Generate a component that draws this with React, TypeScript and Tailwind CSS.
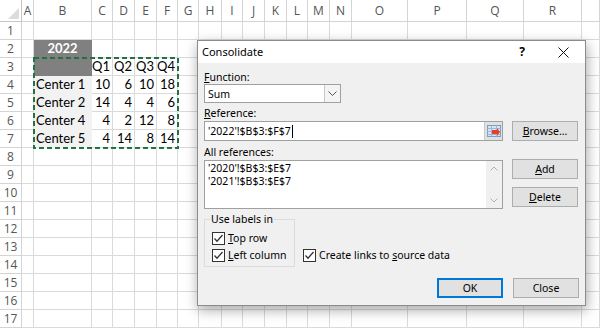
import React from "react";

const colLabels = ["", "A", "B", "C", "D", "E", "F", "G", "H", "I", "J", "K", "L", "M", "N", "O", "P", "Q", "R", ""];

type CellInfo = { t: string; kind: "dark" | "light" | "num" | "plain" | "label" };

const data: Record<string, CellInfo> = {
  "2-2": { t: "2022", kind: "dark" },
  "3-2": { t: "", kind: "dark" },
  "3-3": { t: "Q1", kind: "num" },
  "3-4": { t: "Q2", kind: "num" },
  "3-5": { t: "Q3", kind: "num" },
  "3-6": { t: "Q4", kind: "num" },
  "4-2": { t: "Center 1", kind: "light" },
  "4-3": { t: "10", kind: "num" },
  "4-4": { t: "6", kind: "num" },
  "4-5": { t: "10", kind: "num" },
  "4-6": { t: "18", kind: "num" },
  "5-2": { t: "Center 2", kind: "light" },
  "5-3": { t: "14", kind: "num" },
  "5-4": { t: "4", kind: "num" },
  "5-5": { t: "4", kind: "num" },
  "5-6": { t: "6", kind: "num" },
  "6-2": { t: "Center 4", kind: "light" },
  "6-3": { t: "4", kind: "num" },
  "6-4": { t: "2", kind: "num" },
  "6-5": { t: "12", kind: "num" },
  "6-6": { t: "8", kind: "num" },
  "7-2": { t: "Center 5", kind: "light" },
  "7-3": { t: "4", kind: "num" },
  "7-4": { t: "14", kind: "num" },
  "7-5": { t: "8", kind: "num" },
  "7-6": { t: "14", kind: "num" },
};

function Cell({ r, c }: { r: number; c: number }) {
  const d = data[`${r}-${c}`];
  if (!d) return <div className="border-r border-b border-[#dadada] bg-white" />;
  if (d.kind === "dark")
    return (
      <div className="border-r border-b border-[#808080] bg-[#808080] flex items-center justify-center text-white font-bold">
        {d.t}
      </div>
    );
  if (d.kind === "light")
    return (
      <div className="border-r border-b border-[#f2f2f2] bg-[#f2f2f2] flex items-center pl-[2px] whitespace-nowrap">
        {d.t}
      </div>
    );
  return (
    <div className="border-r border-b border-[#dadada] bg-white flex items-center justify-end pr-[2px] whitespace-nowrap">
      {d.t}
    </div>
  );
}

function Check() {
  return (
    <svg width="13" height="13" viewBox="0 0 13 13" className="shrink-0">
      <rect x="0.5" y="0.5" width="12" height="12" fill="#fff" stroke="#333" />
      <polyline points="2.5,6.5 5,9.2 10.5,3" fill="none" stroke="#333" strokeWidth="1.3" />
    </svg>
  );
}

function Btn({ children, primary }: { children: React.ReactNode; primary?: boolean }) {
  return (
    <div
      className={
        primary
          ? "w-[66px] h-[20px] bg-[#e1e1e1] border-2 border-[#0078d7] flex items-center justify-center"
          : "w-[66px] h-[20px] bg-[#e1e1e1] border border-[#adadad] flex items-center justify-center"
      }
    >
      {children}
    </div>
  );
}

export default function App() {
  const rows = Array.from({ length: 17 }, (_, i) => i + 1);
  return (
    <div className="relative w-[600px] h-[328px] overflow-hidden bg-white font-['Lato',sans-serif] text-[13px] text-black">
      <div className="grid grid-cols-[22px_12px_58px_21px_22px_22px_21px_21px_23px_21px_22px_22px_21px_22px_22px_56px_59px_57px_58px_18px] grid-rows-[22px_repeat(17,18px)]">
        {colLabels.map((l, i) =>
          i === 0 ? (
            <div key={`h${i}`} className="border-r border-b border-[#c6c6c6] bg-white relative">
              <svg width="22" height="22" className="absolute left-0 top-0">
                <polygon points="19,8 19,19 8,19" fill="#dcdcdc" />
              </svg>
            </div>
          ) : (
            <div
              key={`h${i}`}
              className="border-r border-b border-[#d4d4d4] bg-white flex items-center justify-center text-[#555] text-[12px] font-['Open_Sans',sans-serif]"
            >
              {l}
            </div>
          )
        )}
        {rows.map((r) => (
          <React.Fragment key={r}>
            <div className="border-r border-b border-[#d4d4d4] bg-white flex items-center justify-center text-[#555] text-[12px] font-['Open_Sans',sans-serif]">
              {r}
            </div>
            {Array.from({ length: 19 }, (_, j) => (
              <Cell key={j} r={r} c={j + 1} />
            ))}
          </React.Fragment>
        ))}
      </div>

      {/* copy marquee */}
      <svg className="absolute left-[33px] top-[57px]" width="146" height="92">
        <rect x="1" y="1" width="144" height="90" fill="none" stroke="#217346" strokeWidth="2" strokeDasharray="5 3" />
      </svg>

      {/* dialog */}
      <div className="absolute left-[197px] top-[40px] w-[389px] h-[266px] border border-[#8c8c8c] bg-[#f0f0f0] shadow-[1px_4px_12px_rgba(0,0,0,0.35)] flex flex-col font-['Noto_Sans',sans-serif] text-[10.5px] text-black leading-[14px]">
        <div className="h-[22px] shrink-0 bg-white flex items-center pl-[4px]">
          <span className="text-[11px]">Consolidate</span>
          <span className="ml-auto font-bold text-[12px] mr-[33px]">?</span>
          <svg width="11" height="11" viewBox="0 0 11 11" className="mr-[16px]">
            <path d="M0.5 0.5 L10.5 10.5 M10.5 0.5 L0.5 10.5" stroke="#111" strokeWidth="1" />
          </svg>
        </div>
        <div className="flex-1 flex flex-col pl-[6px] pr-[6px] pt-[7px]">
          <div className="h-[14px]">
            <u className="underline-offset-1">F</u>unction:
          </div>
          <div className="w-[137px] h-[19px] border border-[#a0a0a0] bg-white flex items-stretch">
            <div className="flex-1 flex items-center pl-[3px]">Sum</div>
            <div className="w-[16px] border-l border-[#c8c8c8] bg-[#f4f4f4] flex items-center justify-center">
              <svg width="9" height="5" viewBox="0 0 9 5">
                <polyline points="0.5,0.5 4.5,4.5 8.5,0.5" fill="none" stroke="#555" />
              </svg>
            </div>
          </div>
          <div className="h-[14px] mt-[3px]">
            <u className="underline-offset-1">R</u>eference:
          </div>
          <div className="mt-[1px] flex items-start">
            <div className="w-[299px] h-[20px] border border-[#a0a0a0] bg-white flex items-stretch">
              <div className="flex-1 flex items-center pl-[3px]">
                '2022'!$B$3:$F$7<span className="inline-block w-[1px] h-[13px] bg-black ml-[1px]" />
              </div>
              <div className="w-[18px] bg-[#e1e1e1] border-l border-[#c8c8c8] flex items-center justify-center">
                <svg width="14" height="12" viewBox="0 0 14 12">
                  <rect x="0.5" y="0.5" width="13" height="11" fill="#d5e4f3" stroke="#7d9cc0" />
                  <path d="M0.5 3.5 H13.5 M0.5 6.5 H13.5 M0.5 9.5 H13.5 M4.5 0.5 V11.5 M9.5 0.5 V11.5" stroke="#9fb8d6" strokeWidth="1" />
                  <polygon points="5,5 10,5 10,3 13,7 10,11 10,9 5,9" fill="#e0412a" />
                </svg>
              </div>
            </div>
            <div className="ml-[9px]">
              <Btn>
                <span>
                  <u className="underline-offset-1">B</u>rowse...
                </span>
              </Btn>
            </div>
          </div>
          <div className="h-[14px] mt-[4px]">All references:</div>
          <div className="flex items-start h-[50px]">
            <div className="mt-[1px] w-[299px] h-[49px] border border-[#a0a0a0] bg-white flex items-stretch">
              <div className="flex-1 pl-[3px] pt-[1px] leading-[12.5px]">
                <div>'2020'!$B$3:$E$7</div>
                <div>'2021'!$B$3:$E$7</div>
              </div>
              <div className="w-[16px] bg-[#f0f0f0] flex flex-col items-center justify-between py-[5px]">
                <svg width="8" height="5" viewBox="0 0 8 5">
                  <polyline points="0.5,4.5 4,1 7.5,4.5" fill="none" stroke="#b0b0b0" />
                </svg>
                <svg width="8" height="5" viewBox="0 0 8 5">
                  <polyline points="0.5,0.5 4,4 7.5,0.5" fill="none" stroke="#b0b0b0" />
                </svg>
              </div>
            </div>
            <div className="ml-[9px] flex flex-col gap-[8px]">
              <Btn>
                <span>
                  <u className="underline-offset-1">A</u>dd
                </span>
              </Btn>
              <Btn>
                <span>
                  <u className="underline-offset-1">D</u>elete
                </span>
              </Btn>
            </div>
          </div>
          <div className="flex items-end mt-[3px]">
            <fieldset className="w-[91px] h-[55px] border border-[#dcdcdc] pl-[7px] m-0">
              <legend className="px-[1px] -ml-[2px] leading-[14px]">Use labels in</legend>
              <div className="flex items-center h-[14px] mt-[5px] gap-[3px]">
                <Check />
                <span>
                  <u className="underline-offset-1">T</u>op row
                </span>
              </div>
              <div className="flex items-center h-[14px] mt-[3px] gap-[3px]">
                <Check />
                <span>
                  <u className="underline-offset-1">L</u>eft column
                </span>
              </div>
            </fieldset>
            <div className="flex items-center h-[14px] ml-[8px] mb-[5px] gap-[3px]">
              <Check />
              <span>
                Create links to <u className="underline-offset-1">s</u>ource data
              </span>
            </div>
          </div>
          <div className="flex justify-end gap-[10px] mt-[11px]">
            <Btn primary>OK</Btn>
            <Btn>Close</Btn>
          </div>
        </div>
      </div>
    </div>
  );
}
